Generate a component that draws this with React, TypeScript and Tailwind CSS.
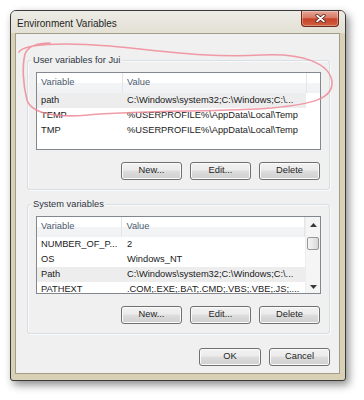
import React from "react";

type Row = { name: string; value: string; selected?: boolean };

const userRows: Row[] = [
  { name: "path", value: "C:\\Windows\\system32;C:\\Windows;C:\\...", selected: true },
  { name: "TEMP", value: "%USERPROFILE%\\AppData\\Local\\Temp" },
  { name: "TMP", value: "%USERPROFILE%\\AppData\\Local\\Temp" },
];

const systemRows: Row[] = [
  { name: "NUMBER_OF_P...", value: "2" },
  { name: "OS", value: "Windows_NT" },
  { name: "Path", value: "C:\\Windows\\system32;C:\\Windows;C:\\...", selected: true },
  { name: "PATHEXT", value: ".COM;.EXE;.BAT;.CMD;.VBS;.VBE;.JS;...." },
];

function WinButton({ label, wide }: { label: string; wide?: boolean }) {
  return (
    <button
      className={`${wide ? "w-[62px]" : "w-[61px]"} h-[18px] rounded-[3px] border border-[#707070] bg-[linear-gradient(to_bottom,#f2f2f2_0%,#ebebeb_45%,#dddddd_50%,#cfcfcf_100%)] text-[9.3px] leading-none text-[#1e1e1e] shadow-[inset_0_0_0_1px_#fbfbfb]`}
    >
      {label}
    </button>
  );
}

function ScrollBar() {
  return (
    <div className="flex w-[15px] shrink-0 flex-col items-center border-l border-[#ededed] bg-[#f5f5f5]">
      <div className="flex h-[16px] w-full items-center justify-center">
        <svg width="7" height="4" viewBox="0 0 7 4">
          <path d="M3.5 0 L7 4 L0 4 Z" fill="#3a3a3a" />
        </svg>
      </div>
      <div className="mt-[4px] h-[13px] w-[12px] rounded-[2px] border border-[#979797] bg-[linear-gradient(to_right,#f4f4f4,#e8e8e8_50%,#d6d6d6)]" />
      <div className="flex-1" />
      <div className="flex h-[12px] w-full items-center justify-center">
        <svg width="7" height="4" viewBox="0 0 7 4">
          <path d="M0 0 L7 0 L3.5 4 Z" fill="#3a3a3a" />
        </svg>
      </div>
    </div>
  );
}

function ListView({ rows, scroll }: { rows: Row[]; scroll?: boolean }) {
  return (
    <div className="flex h-[78px] overflow-hidden border border-[#828790] bg-white">
      <div className="flex min-w-0 flex-1 flex-col">
        {/* column header */}
        <div className="flex h-[20px] shrink-0 bg-[linear-gradient(to_bottom,#ffffff_0%,#ffffff_48%,#f3f4f6_52%,#f1f2f4_100%)] text-[#4c5a6e]">
          <div className="flex w-[86px] items-center border-r border-[#e3e5e8] pl-[4px]">Variable</div>
          <div className="flex w-[184px] items-center border-r border-[#e3e5e8] pl-[4px]">Value</div>
          <div className="flex-1" />
        </div>
        {rows.map((r) => (
          <div
            key={r.name}
            className={`flex h-[15px] w-[269px] shrink-0 items-center text-[#1a1a1a] ${r.selected ? "bg-[#ededed]" : ""}`}
          >
            <div className="w-[86px] shrink-0 whitespace-nowrap pl-[4px]">{r.name}</div>
            <div className="whitespace-nowrap pl-[4px]">{r.value}</div>
          </div>
        ))}
      </div>
      {scroll && <ScrollBar />}
    </div>
  );
}

function GroupBox({ title, rows, scroll }: { title: string; rows: Row[]; scroll?: boolean }) {
  return (
    <div className="relative h-[130px] rounded-[3px] border border-[#d5dfe5] px-[8px] pt-[11px] shadow-[inset_1px_1px_0_#fafafa,1px_1px_0_#fafafa]">
      <span className="absolute left-[3px] top-[-7px] bg-[#f0f0f0] px-[2px] leading-[13px] text-[#2f3542]">
        {title}
      </span>
      <ListView rows={rows} scroll={scroll} />
      <div className="mt-[12px] flex justify-end gap-[8px] pr-[1px]">
        <WinButton label="New..." />
        <WinButton label="Edit..." />
        <WinButton label="Delete" />
      </div>
    </div>
  );
}

export default function App() {
  return (
    <div className="relative h-[400px] w-[364px] overflow-hidden bg-white pl-[10px] pt-[10px] font-['Liberation_Sans',Arial,sans-serif] text-[9.3px]">
      {/* window */}
      <div className="flex h-[371px] w-[336px] flex-col rounded-b-[3px] rounded-t-[6px] border border-[#3a3a3a] bg-[#d8d1b6] shadow-[3px_4px_8px_rgba(0,0,0,0.45)]">
        {/* title bar */}
        <div className="flex h-[22px] shrink-0 justify-between rounded-t-[5px] bg-[linear-gradient(to_bottom,#ecebe6,#e3e0d4)]">
          <div className="pl-[6px] pt-[6px] text-[10px] leading-[13px] text-[#1f1f1f]">Environment Variables</div>
          <div className="mr-[6px] flex h-[16px] w-[38px] items-center justify-center rounded-b-[4px] border border-t-0 border-[#6b2a1c] bg-[linear-gradient(to_bottom,#e7a595_0%,#d77a64_45%,#c7432a_52%,#d0603f_100%)] shadow-[inset_0_0_0_1px_rgba(255,255,255,0.3)]">
            <svg width="11" height="9" viewBox="0 0 11 9">
              <path d="M2 1.5 L9 7.5 M9 1.5 L2 7.5" stroke="#4a1a10" strokeWidth="3.2" strokeLinecap="round" />
              <path d="M2 1.5 L9 7.5 M9 1.5 L2 7.5" stroke="#ffffff" strokeWidth="1.7" strokeLinecap="round" />
            </svg>
          </div>
        </div>

        {/* client area */}
        <div className="ml-[4px] mr-[5px] flex h-[341px] flex-col border border-[#a29d88] bg-[#f0f0f0] pl-[11px] pr-[9px] pt-[26px]">
          <GroupBox title="User variables for Jui" rows={userRows} />
          <div className="mt-[14px]">
            <GroupBox title="System variables" rows={systemRows} scroll />
          </div>
          <div className="mt-[14px] flex justify-end gap-[8px]">
            <WinButton label="OK" wide />
            <WinButton label="Cancel" />
          </div>
        </div>
      </div>

      {/* hand-drawn annotation */}
      <svg className="pointer-events-none absolute left-0 top-0" width="364" height="400" viewBox="0 0 364 400">
        <path
          d="M19 52 C 24 44, 60 42, 110 46 C 165 51, 205 58, 262 55 C 302 53, 330 63, 332 82 C 333 99, 312 104, 272 108 C 220 112, 140 110, 88 115 C 55 118, 31 113, 27 100 C 23 85, 22 66, 25 54 C 28 46, 38 43, 50 43"
          fill="none"
          stroke="#ee8a96"
          strokeOpacity="0.85"
          strokeWidth="1.6"
          strokeLinecap="round"
        />
      </svg>
    </div>
  );
}
